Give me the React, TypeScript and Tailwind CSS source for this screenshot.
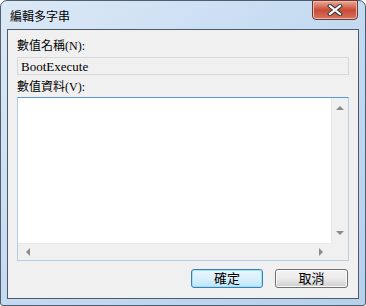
import React from "react";

const font = { fontFamily: '"Liberation Serif", "Noto Sans CJK TC", serif' };

function Arrow({ dir }: { dir: "up" | "down" | "left" | "right" }) {
  const pts = {
    up: "0,4 4,0 8,4",
    down: "0,0 8,0 4,4",
    left: "4,0 4,8 0,4",
    right: "0,0 4,4 0,8",
  }[dir];
  const vertical = dir === "up" || dir === "down";
  return (
    <svg width={vertical ? 8 : 4} height={vertical ? 4 : 8} viewBox={vertical ? "0 0 8 4" : "0 0 4 8"}>
      <polygon points={pts} fill="#8a8a8a" />
    </svg>
  );
}

function Button({ label, focused }: { label: string; focused?: boolean }) {
  return (
    <button
      className={
        "h-[19px] rounded-[3px] border text-[13px] leading-none text-black flex items-center justify-center " +
        (focused
          ? "w-[72px] border-[#3c7fb1] bg-gradient-to-b from-[#eaf6fd] via-[#d9f0fc] to-[#bee6fd] shadow-[inset_0_0_0_1px_#9ce0fa]"
          : "w-[73px] border-[#707070] bg-gradient-to-b from-[#f2f2f2] via-[#ebebeb] to-[#cfcfcf] shadow-[inset_0_0_0_1px_#fcfcfc]")
      }
      style={font}
    >
      {label}
    </button>
  );
}

export default function App() {
  return (
    <div className="w-[366px] h-[306px] bg-white">
      {/* Window frame */}
      <div className="w-[366px] h-[306px] rounded-t-[7px] rounded-b-[3px] border border-[#4f5d6c] bg-gradient-to-br from-[#dce9f6] via-[#c4daf1] to-[#b7d0ec] flex flex-col px-[6px] pb-[6px]">
        {/* Title bar */}
        <div className="h-[28px] flex items-start justify-between">
          <span
            className="mt-[8px] ml-[3px] text-[12px] leading-[13px] text-black"
            style={{ fontFamily: '"Noto Sans CJK TC", sans-serif' }}
          >
            編輯多字串
          </span>
          <div className="w-[46px] h-[20px] -mt-px mr-[1px] rounded-b-[4px] border border-[#6b3a33] bg-gradient-to-b from-[#e9a99a] via-[#c84b34] to-[#d6735f] shadow-[inset_0_0_0_1px_#f0b8aa] flex items-center justify-center">
            <svg width="16" height="12" viewBox="0 0 16 12">
              <path d="M3 2 L13 10 M13 2 L3 10" stroke="#3a3a3a" strokeWidth="4.2" strokeLinecap="square" />
              <path d="M3 2 L13 10 M13 2 L3 10" stroke="#ffffff" strokeWidth="2.2" strokeLinecap="square" />
            </svg>
          </div>
        </div>

        {/* Client area */}
        <div className="flex-1 border border-[#4d5b69] bg-[#f0f0f0] flex flex-col px-[9px] pt-[10px]">
          <div className="h-[13px] leading-[13px] text-[12px] text-black" style={font}>
            數值名稱(N):
          </div>
          <div className="mt-[4px] h-[18px] border border-[#d9d9d9] bg-[#f0f0f0] flex items-center pl-[3px]">
            <span className="text-[13px] leading-none text-black" style={font}>
              BootExecute
            </span>
          </div>
          <div className="mt-[6px] h-[13px] leading-[13px] text-[12px] text-black" style={font}>
            數值資料(V):
          </div>
          {/* Multiline edit box */}
          <div className="mt-[3px] h-[164px] border border-[#b5cfe7] border-t-[#5b9bd5] bg-white flex flex-col">
            <div className="flex-1 flex">
              <div className="flex-1" />
              <div className="w-[17px] bg-[#f0f0f0] border-l border-[#e8e8e8] flex flex-col items-center justify-between py-[8px]">
                <Arrow dir="up" />
                <Arrow dir="down" />
              </div>
            </div>
            <div className="h-[17px] flex">
              <div className="flex-1 bg-[#f0f0f0] border-t border-[#e8e8e8] flex items-center justify-between px-[8px]">
                <Arrow dir="left" />
                <Arrow dir="right" />
              </div>
              <div className="w-[17px] bg-[#f0f0f0]" />
            </div>
          </div>
          {/* Buttons */}
          <div className="mt-[8px] mr-px flex justify-end gap-[12px]">
            <Button label="確定" focused />
            <Button label="取消" />
          </div>
        </div>
      </div>
    </div>
  );
}
